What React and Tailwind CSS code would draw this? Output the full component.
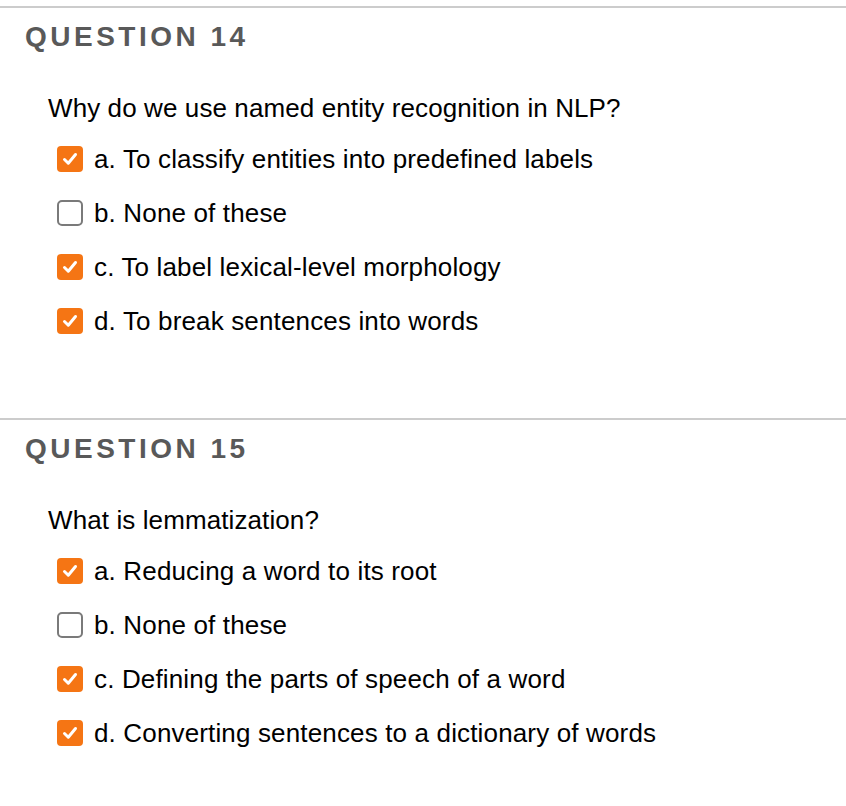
import React from "react";

function Check({ checked }) {
  if (checked) {
    return (
      <span className="flex h-[26px] w-[26px] shrink-0 items-center justify-center rounded-[4px] bg-[#f57514]">
        <svg width="18" height="18" viewBox="0 0 18 18" fill="none">
          <path d="M3.5 9.5 L7.3 13.2 L14.5 4.5" stroke="white" strokeWidth="3" strokeLinecap="round" strokeLinejoin="round" />
        </svg>
      </span>
    );
  }
  return <span className="h-[26px] w-[26px] shrink-0 rounded-[5px] border-2 border-[#7a7a7a] bg-white" />;
}

function Question({ num, text, options }) {
  return (
    <div className="border-t-2 border-[#cccccc]">
      <div className="pl-[25px] pt-[9px] text-[28px] font-bold leading-[40px] tracking-[3.5px] text-[#595959]">
        QUESTION {num}
      </div>
      <div className="pl-[48px] pt-[34px] text-[26px] leading-[34px] tracking-[0.1px] text-black">{text}</div>
      <div className="flex flex-col gap-[20px] pl-[57px] pt-[17px]">
        {options.map(([c, t]) => (
          <div key={t} className="flex items-center gap-[11px] text-[26px] leading-[34px] tracking-[0.15px] text-black">
            <Check checked={c} />
            <span>{t}</span>
          </div>
        ))}
      </div>
    </div>
  );
}

export default function App() {
  return (
    <div className="min-h-[806px] w-[846px] bg-white pt-[6px]" style={{ fontFamily: '"Liberation Sans", Arial, sans-serif' }}>
      <div className="h-[412px]">
        <Question
          num={14}
          text="Why do we use named entity recognition in NLP?"
          options={[
            [true, "a. To classify entities into predefined labels"],
            [false, "b. None of these"],
            [true, "c. To label lexical-level morphology"],
            [true, "d. To break sentences into words"],
          ]}
        />
      </div>
      <Question
        num={15}
        text="What is lemmatization?"
        options={[
          [true, "a. Reducing a word to its root"],
          [false, "b. None of these"],
          [true, "c. Defining the parts of speech of a word"],
          [true, "d. Converting sentences to a dictionary of words"],
        ]}
      />
    </div>
  );
}
